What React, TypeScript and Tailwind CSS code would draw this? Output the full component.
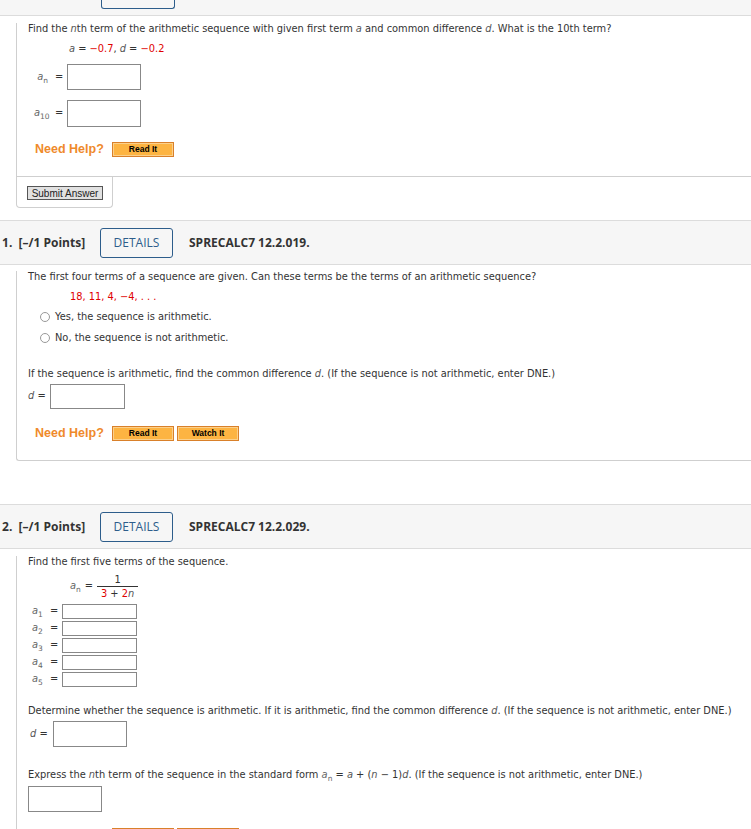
import React from 'react';

const Red: React.FC<{ children: React.ReactNode }> = ({ children }) => (
  <span className="text-[#e00000]">{children}</span>
);

const V: React.FC<{ children: React.ReactNode }> = ({ children }) => (
  <i className="italic text-[#555]">{children}</i>
);

const Sub: React.FC<{ base: string; sub: string }> = ({ base, sub }) => (
  <span className="italic text-[#666]">
    {base}
    <span className="not-italic text-[7.5px] relative top-[3px]">{sub}</span>
  </span>
);

const Box: React.FC<{ w?: string; h?: string }> = ({ w = 'w-[74px]', h = 'h-[26px]' }) => (
  <div className={`${w} ${h} border border-[#888] bg-white shrink-0`} />
);

const HelpButton: React.FC<{ label: string }> = ({ label }) => (
  <div className="w-[62px] h-[15px] border border-[#d9802a] bg-[#fdb442] shadow-[inset_0_0_0_1px_#fcd08a] flex items-center justify-center font-['Liberation_Sans',Arial,sans-serif] font-bold text-[8.5px] text-black shrink-0">
    {label}
  </div>
);

const NeedHelp: React.FC<{ buttons: string[]; className?: string }> = ({ buttons, className = '' }) => (
  <div className={`flex items-center h-[15px] ${className}`}>
    <span className="ml-[7px] w-[77px] font-['Liberation_Sans',Arial,sans-serif] font-bold text-[12.5px] text-[#ef8a2b]">
      Need Help?
    </span>
    <div className="flex gap-[3px]">
      {buttons.map((b) => (
        <HelpButton key={b} label={b} />
      ))}
    </div>
  </div>
);

const Header: React.FC<{ num: string; code: string }> = ({ num, code }) => (
  <div className="h-[45px] bg-[#f6f6f6] border-y border-[#dcdcdc] flex items-center font-['Open_Sans',sans-serif] text-[12px] text-[#333]">
    <span className="w-[100px] pl-[2px] font-bold whitespace-pre">{num}.  [–/1 Points]</span>
    <div className="w-[73px] h-[30px] border border-[#2d5d8b] rounded-[3px] flex items-center justify-center text-[#2d5d8b]">
      DETAILS
    </div>
    <span className="ml-[16px] font-bold">{code}</span>
  </div>
);

const Line: React.FC<{ children: React.ReactNode; className?: string }> = ({ children, className = '' }) => (
  <p className={`h-[12px] leading-[12px] whitespace-nowrap ${className}`}>{children}</p>
);

const Radio: React.FC<{ label: string; className?: string }> = ({ label, className = '' }) => (
  <div className={`flex items-center h-[12px] ml-[12px] ${className}`}>
    <span className="w-[10px] h-[10px] rounded-full border border-[#999] bg-white shrink-0" />
    <span className="ml-[5px]">{label}</span>
  </div>
);

export default function App() {
  return (
    <div className="w-[751px] h-[829px] overflow-hidden bg-white font-['DejaVu_Sans',Verdana,sans-serif] text-[9.85px] text-[#333]">
      {/* previous question header, scrolled out of view: only the bottom of its DETAILS box shows */}
      <div className="h-[16px] bg-[#f6f6f6] border-b border-[#dcdcdc] flex items-start">
        <div className="ml-[101px] w-[74px] h-[9px] border-x border-b border-[#2d5d8b] rounded-b-[3px]" />
      </div>

      {/* question 0 body */}
      <div className="ml-[16px] border-l border-b border-[#cfcfcf] pl-[11px] pb-[19px]">
        <Line className="mt-[7px]">
          Find the <V>n</V>th term of the arithmetic sequence with given first term <V>a</V> and common difference{' '}
          <V>d</V>. What is the 10th term?
        </Line>
        <Line className="mt-[8px] ml-[41px]">
          <V>a</V> = <Red>−0.7</Red>, <V>d</V> = <Red>−0.2</Red>
        </Line>
        <div className="flex items-center mt-[9px] ml-[6px] h-[26px]">
          <span className="w-[14px] text-right">
            <Sub base="a" sub="n" />
          </span>
          <span className="ml-[7px]">=</span>
          <span className="ml-[4px]">
            <Box />
          </span>
        </div>
        <div className="flex items-center mt-[10px] ml-[6px] h-[27px]">
          <span className="w-[14px] text-right">
            <Sub base="a" sub="10" />
          </span>
          <span className="ml-[7px]">=</span>
          <span className="ml-[4px]">
            <Box h="h-[27px]" />
          </span>
        </div>
        <NeedHelp buttons={['Read It']} className="mt-[15px]" />
      </div>
      <div className="ml-[16px] w-[97px] h-[31px] border-x border-b border-[#cfcfcf] rounded-b-[4px] pl-[10px] pt-[9px]">
        <div className="w-[76px] h-[14px] border border-[#555] bg-[#e1e1e1] flex items-center justify-center font-['Liberation_Sans',Arial,sans-serif] text-[10px] text-[#222]">
          Submit Answer
        </div>
      </div>

      <div className="mt-[12px]">
        <Header num="1" code="SPRECALC7 12.2.019." />
      </div>

      {/* question 1 body */}
      <div className="ml-[16px] border-l border-b border-[#cfcfcf] rounded-bl-[3px] pl-[11px] pb-[19px]">
        <Line className="mt-[6px]">
          The first four terms of a sequence are given. Can these terms be the terms of an arithmetic sequence?
        </Line>
        <Line className="mt-[8px] ml-[42px]">
          <Red>18, 11, 4, −4, . . .</Red>
        </Line>
        <Radio label="Yes, the sequence is arithmetic." className="mt-[8px]" />
        <Radio label="No, the sequence is not arithmetic." className="mt-[9px]" />
        <Line className="mt-[24px]">
          If the sequence is arithmetic, find the common difference <V>d</V>. (If the sequence is not arithmetic, enter
          DNE.)
        </Line>
        <div className="flex items-center mt-[4px] h-[25px]">
          <span>
            <V>d</V> =
          </span>
          <span className="ml-[4px]">
            <Box w="w-[75px]" h="h-[25px]" />
          </span>
        </div>
        <NeedHelp buttons={['Read It', 'Watch It']} className="mt-[17px]" />
      </div>

      <div className="mt-[43px]">
        <Header num="2" code="SPRECALC7 12.2.029." />
      </div>

      {/* question 2 body */}
      <div className="ml-[16px] border-l border-[#cfcfcf] pl-[11px] pb-[40px]">
        <Line className="mt-[7px]">Find the first five terms of the sequence.</Line>
        <div className="flex items-center mt-[5px] ml-[42px] h-[26px]">
          <Sub base="a" sub="n" />
          <span className="ml-[4px]">=</span>
          <div className="ml-[4px] flex flex-col items-center w-[41px]">
            <span className="leading-[11px] h-[12px]">1</span>
            <span className="w-full border-t border-[#333]" />
            <span className="leading-[11px] h-[12px] pt-[1px]">
              <Red>3</Red> + <Red>2</Red>
              <V>n</V>
            </span>
          </div>
        </div>
        <div className="flex flex-col gap-[2px] mt-[5px] ml-[4px]">
          {['1', '2', '3', '4', '5'].map((n) => (
            <div key={n} className="flex items-center h-[15px]">
              <span className="w-[10px]">
                <Sub base="a" sub={n} />
              </span>
              <span className="ml-[8px]">=</span>
              <span className="ml-[4px]">
                <Box w="w-[75px]" h="h-[15px]" />
              </span>
            </div>
          ))}
        </div>
        <Line className="mt-[18px]">
          Determine whether the sequence is arithmetic. If it is arithmetic, find the common difference <V>d</V>. (If
          the sequence is not arithmetic, enter DNE.)
        </Line>
        <div className="flex items-center mt-[4px] ml-[2px] h-[26px]">
          <span>
            <V>d</V> =
          </span>
          <span className="ml-[5px]">
            <Box />
          </span>
        </div>
        <Line className="mt-[22px]">
          Express the <V>n</V>th term of the sequence in the standard form <Sub base="a" sub="n" /> = <V>a</V> + (
          <V>n</V> − 1)<V>d</V>.  (If the sequence is not arithmetic, enter DNE.)
        </Line>
        <div className="mt-[5px]">
          <Box />
        </div>
        {/* help row below the fold: only the top edge of its buttons is in view */}
        <div className="flex gap-[3px] mt-[16px] ml-[84px]">
          <div className="w-[62px] h-[15px] border border-[#d9802a] bg-[#fdb442]" />
          <div className="w-[62px] h-[15px] border border-[#d9802a] bg-[#fdb442]" />
        </div>
      </div>
    </div>
  );
}
